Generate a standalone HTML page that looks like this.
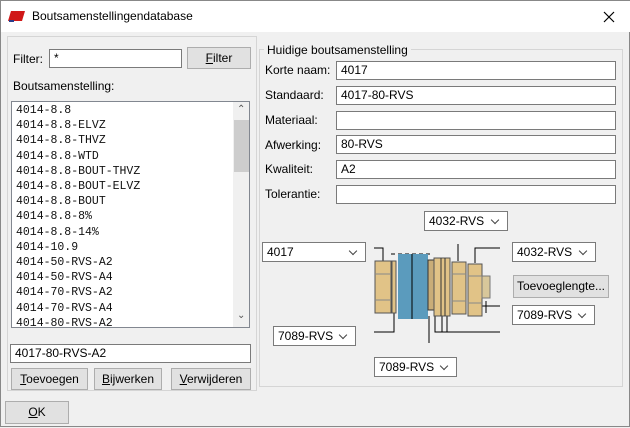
<!DOCTYPE html>
<html><head><style>
*{box-sizing:border-box;margin:0;padding:0}
body{width:630px;height:427px;background:#f0f0f0;font-family:"Liberation Sans",sans-serif;font-size:12px;color:#000;position:relative;overflow:hidden;border:1px solid #888}
.a{position:absolute}
.tb{left:0;top:0;width:630px;height:31px;background:#fff}
.in{position:absolute;background:#fff;border:1px solid #7a7a7a;height:19px;padding:1px 4px;font-size:12px;line-height:15px}
.btn{position:absolute;background:#e1e1e1;border:1px solid #adadad;height:22px;text-align:center;line-height:20px;font-size:12px}
.cb{position:absolute;background:#fff;border:1px solid #7a7a7a;height:20px;padding:1px 4px;line-height:16px}
.cb:after{content:"";position:absolute;right:9px;top:5px;width:5px;height:5px;border-right:1px solid #444;border-bottom:1px solid #444;transform:rotate(45deg)}
.lb{font-size:12px}
.li{font-family:"Liberation Mono",monospace;font-size:11.5px;line-height:15.2px;color:#111}
</style></head><body>
<div class="a tb"></div>
<svg class="a" style="left:7px;top:8px" width="18" height="14"><polygon points="3,2 17,2 14,12 0,12" fill="#d01818"/><rect x="1" y="11" width="5" height="2" fill="#2a3c8a"/></svg>
<div class="a" style="left:31px;top:8px;font-size:12px">Boutsamenstellingendatabase</div>
<svg class="a" style="left:602px;top:10px" width="12" height="12"><path d="M1 1L11 11M11 1L1 11" stroke="#000" stroke-width="1.2"/></svg>
<div class="a" style="left:6px;top:35px;width:250px;height:355px;border:1px solid #d5d5d5"></div>
<div class="a lb" style="left:12px;top:51px">Filter:</div>
<div class="in" style="left:48px;top:48px;width:133px">*</div>
<div class="btn" style="left:186px;top:46px;width:64px"><u>F</u>ilter</div>
<div class="a lb" style="left:12px;top:78px">Boutsamenstelling:</div>
<div class="a" style="left:10px;top:100px;width:239px;height:227px;background:#fff;border:1px solid #828790;overflow:hidden">
<div class="li" style="position:absolute;left:4px;top:1px">4014-8.8<br>4014-8.8-ELVZ<br>4014-8.8-THVZ<br>4014-8.8-WTD<br>4014-8.8-BOUT-THVZ<br>4014-8.8-BOUT-ELVZ<br>4014-8.8-BOUT<br>4014-8.8-8%<br>4014-8.8-14%<br>4014-10.9<br>4014-50-RVS-A2<br>4014-50-RVS-A4<br>4014-70-RVS-A2<br>4014-70-RVS-A4<br>4014-80-RVS-A2</div>
<div style="position:absolute;left:221px;top:0;width:17px;height:225px;background:#f0f0f0"></div>
<div style="position:absolute;left:222px;top:18px;width:15px;height:52px;background:#cdcdcd"></div>
<div style="position:absolute;left:225px;top:2px;font-size:10px;color:#555">⌃</div>
<div style="position:absolute;left:225px;top:208px;font-size:10px;color:#555">⌄</div>
</div>
<div class="in" style="left:9px;top:343px;width:241px">4017-80-RVS-A2</div>
<div class="btn" style="left:10px;top:367px;width:77px"><u>T</u>oevoegen</div>
<div class="btn" style="left:93px;top:367px;width:68px"><u>B</u>ijwerken</div>
<div class="btn" style="left:170px;top:367px;width:80px"><u>V</u>erwijderen</div>
<div class="btn" style="left:4px;top:400px;width:64px;height:23px"><u>O</u>K</div>
<div class="a" style="left:258px;top:48px;width:364px;height:338px;border:1px solid #d5d5d5"></div>
<div class="a" style="left:263px;top:42px;background:#f0f0f0;padding:0 3px;font-size:12px">Huidige boutsamenstelling</div>
<div class="a lb" style="left:264px;top:62px">Korte naam:</div><div class="in" style="left:335px;top:60px;width:280px">4017</div>
<div class="a lb" style="left:264px;top:87px">Standaard:</div><div class="in" style="left:335px;top:85px;width:280px">4017-80-RVS</div>
<div class="a lb" style="left:264px;top:112px">Materiaal:</div><div class="in" style="left:335px;top:110px;width:280px"></div>
<div class="a lb" style="left:264px;top:137px">Afwerking:</div><div class="in" style="left:335px;top:134px;width:280px">80-RVS</div>
<div class="a lb" style="left:264px;top:161px">Kwaliteit:</div><div class="in" style="left:335px;top:159px;width:280px">A2</div>
<div class="a lb" style="left:264px;top:186px">Tolerantie:</div><div class="in" style="left:335px;top:184px;width:280px"></div>
<div class="cb" style="left:423px;top:210px;width:84px">4032-RVS</div>
<div class="cb" style="left:261px;top:241px;width:104px">4017</div>
<div class="cb" style="left:511px;top:241px;width:84px">4032-RVS</div>
<div class="btn" style="left:512px;top:274px;width:96px;height:23px;line-height:21px">Toevoeglengte...</div>
<div class="cb" style="left:511px;top:304px;width:83px">7089-RVS</div>
<div class="cb" style="left:272px;top:325px;width:83px">7089-RVS</div>
<div class="cb" style="left:373px;top:356px;width:83px">7089-RVS</div>
<svg class="a" style="left:0;top:0" width="630" height="427">
<g stroke="#000" stroke-width="1" fill="none">
<polyline points="373,247 382,247 382,260"/>
<polyline points="373,331 393,331 393,312"/>
<line x1="390" y1="253" x2="430" y2="253" stroke-dasharray="4,3"/>
<line x1="428" y1="315" x2="428" y2="342"/>
<polyline points="434,315 434,331 499,331"/>
<line x1="441" y1="315" x2="441" y2="331"/><line x1="446" y1="315" x2="446" y2="331"/>
<line x1="457" y1="243" x2="457" y2="260"/>
<polyline points="474,262 474,247 499,247"/>
<line x1="478" y1="305" x2="499" y2="305"/>
<line x1="485" y1="300" x2="485" y2="312"/>
</g>
<rect x="374" y="260" width="16" height="52" fill="#e1c387" stroke="#555"/>
<line x1="374" y1="273" x2="390" y2="273" stroke="#888"/><line x1="374" y1="299" x2="390" y2="299" stroke="#888"/>
<rect x="391" y="260" width="4" height="52" fill="#e1c387" stroke="#555"/>
<rect x="397" y="253" width="30" height="65" fill="#5b9bbd"/>
<line x1="411" y1="253" x2="411" y2="318" stroke="#000"/>
<rect x="427" y="259" width="6" height="50" fill="#c9ad78" stroke="#333"/>
<rect x="433" y="257" width="16" height="58" fill="#e1c387" stroke="#555"/>
<line x1="440" y1="257" x2="440" y2="315" stroke="#333"/><line x1="444" y1="257" x2="444" y2="315" stroke="#333"/>
<rect x="451" y="261" width="14" height="52" fill="#e1c387" stroke="#555"/>
<line x1="451" y1="273" x2="465" y2="273" stroke="#888"/><line x1="451" y1="300" x2="465" y2="300" stroke="#888"/>
<rect x="467" y="263" width="14" height="52" fill="#e1c387" stroke="#555"/>
<line x1="467" y1="275" x2="481" y2="275" stroke="#888"/><line x1="467" y1="302" x2="481" y2="302" stroke="#888"/>
<rect x="481" y="275" width="8" height="22" fill="#d8c79a" stroke="#777"/>
</svg>
</body></html>
